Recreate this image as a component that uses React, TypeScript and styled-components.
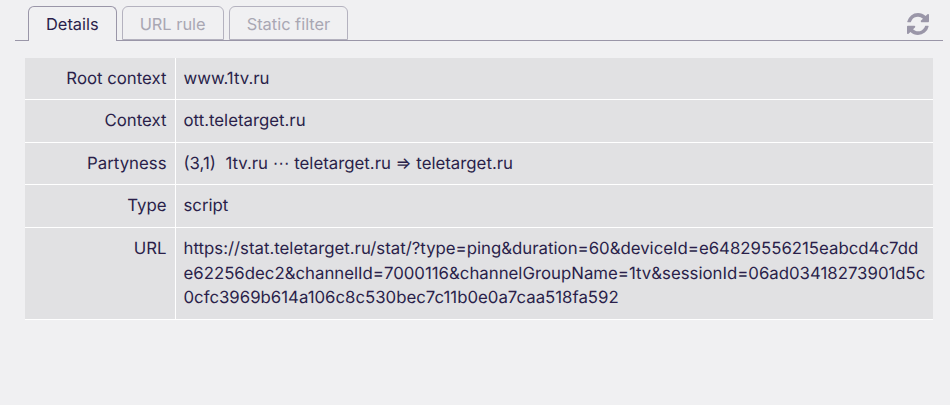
import styled, { createGlobalStyle } from 'styled-components';

const GlobalStyle = createGlobalStyle`
  html, body {
    margin: 0;
    padding: 0;
    background-color: #f0f0f2;
  }
  body {
    color: #2a1f4a;
    font-family: Inter, "Liberation Sans", sans-serif;
    font-size: 16.8px;
    text-rendering: geometricPrecision;
  }
`;

const rows = [
  { label: 'Root context', value: 'www.1tv.ru' },
  { label: 'Context', value: 'ott.teletarget.ru' },
  { label: 'Partyness', value: '(3,1)\u00a0 1tv.ru ⋯ teletarget.ru ⇒ teletarget.ru' },
  { label: 'Type', value: 'script' },
  {
    label: 'URL',
    value:
      'https://stat.teletarget.ru/stat/?type=ping&duration=60&deviceId=e64829556215eabcd4c7dde62256dec2&channelId=7000116&channelGroupName=1tv&sessionId=06ad03418273901d5c0cfc3969b614a106c8c530bec7c11b0e0a7caa518fa592',
  },
];

export default function App() {
  return (
    <Container>
      <GlobalStyle />
      <TabBar>
        <Tab $active>Details</Tab>
        <Tab>URL rule</Tab>
        <Tab>Static filter</Tab>
        <ReloadButton>
          <svg width="22" height="22" viewBox="128 128 1536 1536" fill="currentColor">
            <path d="M1639 1056q0 5-1 7-64 268-268 434.500t-478 166.500q-146 0-282.500-55t-243.500-157l-129 129q-19 19-45 19t-45-19-19-45v-448q0-26 19-45t45-19h448q26 0 45 19t19 45-19 45l-137 137q71 66 161 102t187 36q134 0 250-65t186-179q11-17 53-117 8-23 30-23h192q13 0 22.500 9.500t9.500 22.500zm25-800v448q0 26-19 45t-45 19h-448q-26 0-45-19t-19-45 19-45l138-138q-148-137-349-137-134 0-250 65t-186 179q-11 17-53 117-8 23-30 23h-199q-13 0-22.500-9.500t-9.500-22.500v-7q65-268 270-434.500t480-166.500q146 0 284 55.500t245 156.500l130-129q19-19 45-19t45 19 19 45z" />
          </svg>
        </ReloadButton>
      </TabBar>
      <DetailsTable>
        <tbody>
          {rows.map((row) => (
            <tr key={row.label}>
              <LabelCell>{row.label}</LabelCell>
              <ValueCell>{row.value}</ValueCell>
            </tr>
          ))}
        </tbody>
      </DetailsTable>
    </Container>
  );
}

const Container = styled.div`
  display: flex;
  flex-direction: column;
  width: 950px;
  height: 405px;
  overflow: hidden;
`;

const TabBar = styled.div`
  display: flex;
  align-items: flex-end;
  gap: 5px;
  box-sizing: border-box;
  width: 928px;
  height: 41px;
  margin-left: 15px;
  padding-left: 13px;
  border-bottom: 1px solid #9a96a8;
`;

const Tab = styled.div<{ $active?: boolean }>`
  box-sizing: border-box;
  height: ${(props) => (props.$active ? '35px' : '34px')};
  margin-bottom: ${(props) => (props.$active ? '-1px' : '0')};
  padding: 0 17px;
  font-size: 16.4px;
  line-height: 34px;
  border: 1px solid #b4b2bf;
  border-bottom: ${(props) => (props.$active ? 'none' : '1px solid #b4b2bf')};
  border-radius: 6px 6px 0 0;
  border-color: ${(props) => (props.$active ? '#9a96a8' : '#b4b2bf')};
  background-color: #f0f0f2;
  color: ${(props) => (props.$active ? '#2a1f4a' : '#a9a7b3')};
`;

const ReloadButton = styled.div`
  display: flex;
  margin-left: auto;
  margin-bottom: 5.5px;
  margin-right: 14px;
  color: #9a96a8;
`;

const DetailsTable = styled.table`
  width: 908px;
  margin: 16.5px 0 0 25px;
  border-collapse: collapse;
  line-height: 24.6px;
`;

const LabelCell = styled.td`
  box-sizing: border-box;
  width: 150px;
  padding: 9.2px 8px 7.8px;
  border-bottom: 1px solid #ffffff;
  border-right: 1px solid #ffffff;
  background-color: #e1e1e3;
  text-align: right;
  vertical-align: top;
`;

const ValueCell = styled.td`
  padding: 9.2px 6px 7.8px 8px;
  border-bottom: 1px solid #ffffff;
  background-color: #e1e1e3;
  word-break: break-all;
  vertical-align: top;
`;
